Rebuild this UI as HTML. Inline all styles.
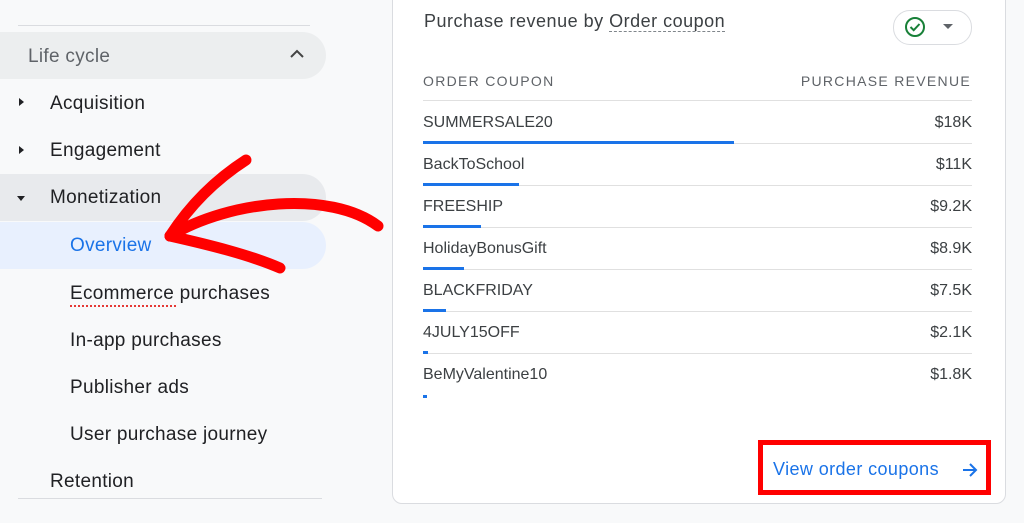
<!DOCTYPE html>
<html><head><style>
body{margin:0;width:1024px;height:523px;background:#f8f9fa;font-family:"Liberation Sans",Arial,sans-serif;position:relative;overflow:hidden}
.side{position:absolute;left:0;top:0;width:340px;height:523px;background:#f8f9fa}
.t{position:absolute;font-size:19px;color:#202124;letter-spacing:0.3px}
.pill{position:absolute;left:0;width:326px;height:47px;border-radius:0 24px 24px 0}
.tri{position:absolute;width:0;height:0}
.card{position:absolute;left:392px;top:-10px;width:612px;height:512px;background:#fff;border:1px solid #dadce0;border-radius:10px}
.row{position:absolute;left:423px;width:549px;height:42px;border-bottom:1px solid #e0e0e0;font-size:16px;color:#3c4043}
.row .n{position:absolute;left:0;top:13px}
.row .v{position:absolute;right:0;top:13px}
.row .b{position:absolute;left:0;bottom:-1px;height:3px;background:#1a73e8}
</style></head><body>
<div class="side">
<div style="position:absolute;left:18px;top:25px;width:292px;height:1px;background:#dadce0"></div>
<div class="pill" style="top:32px;background:#eceeef"></div>
<div class="t" style="left:28px;top:46px;color:#5f6368">Life cycle</div>
<svg style="position:absolute;left:289px;top:48px" width="16" height="12"><path d="M2 9 L8 3 L14 9" fill="none" stroke="#444" stroke-width="2"/></svg>
<div class="tri" style="left:19px;top:98px;border-left:5px solid #202124;border-top:4px solid transparent;border-bottom:4px solid transparent"></div>
<div class="t" style="left:50px;top:93px">Acquisition</div>
<div class="tri" style="left:19px;top:146px;border-left:5px solid #202124;border-top:4px solid transparent;border-bottom:4px solid transparent"></div>
<div class="t" style="left:50px;top:140px">Engagement</div>
<div class="pill" style="top:174px;background:#e8eaed"></div>
<div class="tri" style="left:17px;top:196px;border-top:5px solid #202124;border-left:4px solid transparent;border-right:4px solid transparent"></div>
<div class="t" style="left:50px;top:187px">Monetization</div>
<div class="pill" style="top:222px;background:#e8f0fe"></div>
<div class="t" style="left:70px;top:235px;color:#1a73e8">Overview</div>
<div class="t" style="left:70px;top:283px">Ecommerce purchases</div>
<div style="position:absolute;left:70px;top:305px;width:106px;border-bottom:2px dotted #e53935"></div>
<div class="t" style="left:70px;top:330px">In-app purchases</div>
<div class="t" style="left:70px;top:377px">Publisher ads</div>
<div class="t" style="left:70px;top:424px">User purchase journey</div>
<div class="t" style="left:50px;top:471px">Retention</div>
<div style="position:absolute;left:18px;top:498px;width:304px;height:1px;background:#dadce0"></div>
</div>
<div class="card"></div>
<div class="t" style="left:424px;top:11px;font-size:18px;color:#3c4043;letter-spacing:0.5px">Purchase revenue by <span style="border-bottom:1px dashed #80868b">Order coupon</span></div>
<div style="position:absolute;left:893px;top:10px;width:77px;height:33px;border:1px solid #dadce0;border-radius:17px;background:#fff"></div>
<svg style="position:absolute;left:904px;top:16px" width="22" height="22"><circle cx="11" cy="11" r="9" fill="none" stroke="#188038" stroke-width="2"/><path d="M6.5 11 L9.7 14.2 L15.5 8" fill="none" stroke="#188038" stroke-width="2"/></svg>
<div class="tri" style="left:943px;top:24px;border-top:5px solid #5f6368;border-left:5px solid transparent;border-right:5px solid transparent"></div>
<div style="position:absolute;left:423px;top:73px;font-size:14px;letter-spacing:1.3px;color:#5f6368">ORDER COUPON</div>
<div style="position:absolute;right:53px;top:73px;font-size:14px;letter-spacing:1.3px;color:#5f6368">PURCHASE REVENUE</div>
<div style="position:absolute;left:423px;top:100px;width:549px;height:1px;background:#e0e0e0"></div>
<div class="row" style="top:101px"><span class="n">SUMMERSALE20</span><span class="v">$18K</span><div class="b" style="width:311px"></div></div>
<div class="row" style="top:143px"><span class="n">BackToSchool</span><span class="v">$11K</span><div class="b" style="width:96px"></div></div>
<div class="row" style="top:185px"><span class="n">FREESHIP</span><span class="v">$9.2K</span><div class="b" style="width:58px"></div></div>
<div class="row" style="top:227px"><span class="n">HolidayBonusGift</span><span class="v">$8.9K</span><div class="b" style="width:41px"></div></div>
<div class="row" style="top:269px"><span class="n">BLACKFRIDAY</span><span class="v">$7.5K</span><div class="b" style="width:23px"></div></div>
<div class="row" style="top:311px"><span class="n">4JULY15OFF</span><span class="v">$2.1K</span><div class="b" style="width:5px"></div></div>
<div class="row" style="top:353px;border-bottom:none"><span class="n">BeMyValentine10</span><span class="v">$1.8K</span><div class="b" style="width:4px;bottom:-3px"></div></div>
<div style="position:absolute;left:758px;top:440px;width:223px;height:45px;border:5px solid #f00"></div>
<div style="position:absolute;left:773px;top:459px;font-size:18px;color:#1a73e8;letter-spacing:0.4px">View order coupons</div>
<svg style="position:absolute;left:961px;top:461px" width="18" height="18"><path d="M2 9 H15 M9 3 L15 9 L9 15" fill="none" stroke="#1a73e8" stroke-width="2"/></svg>
<svg style="position:absolute;left:0;top:0" width="1024" height="523"><g fill="none" stroke="#f00" stroke-width="11" stroke-linecap="round" stroke-linejoin="round"><path d="M246 160 C215 180 190 205 170 236"/><path d="M170 236 C230 200 330 190 378 226"/><path d="M170 236 C210 245 250 255 280 268"/></g></svg>
</body></html>
